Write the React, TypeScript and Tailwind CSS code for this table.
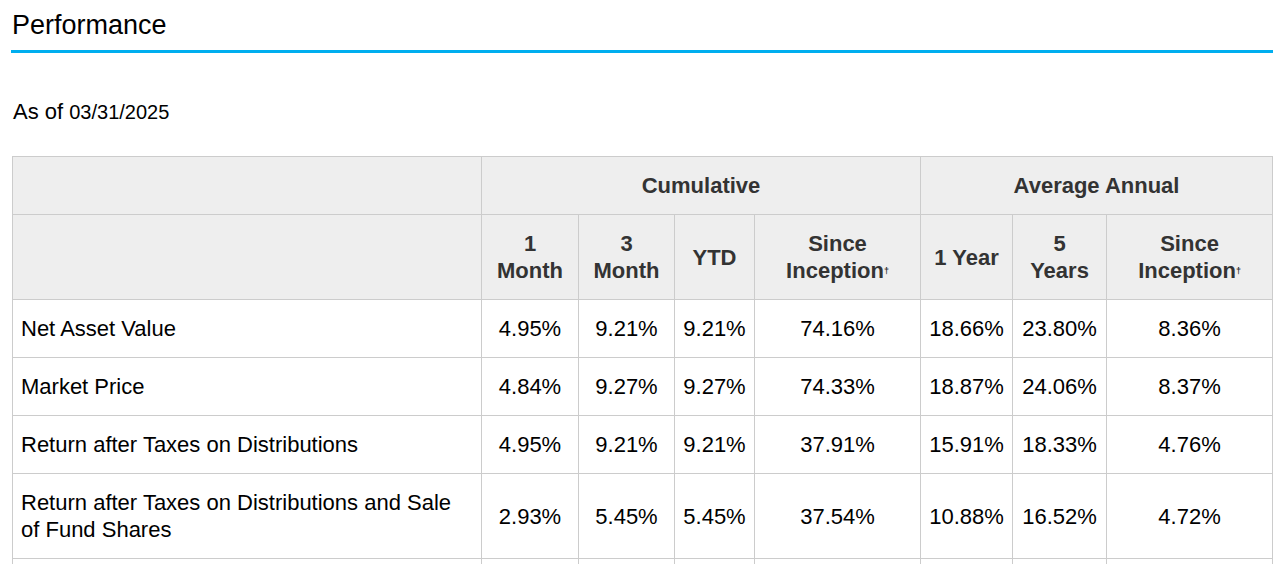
const rows = [
  { label: 'Net Asset Value', values: ['4.95%', '9.21%', '9.21%', '74.16%', '18.66%', '23.80%', '8.36%'] },
  { label: 'Market Price', values: ['4.84%', '9.27%', '9.27%', '74.33%', '18.87%', '24.06%', '8.37%'] },
  { label: 'Return after Taxes on Distributions', values: ['4.95%', '9.21%', '9.21%', '37.91%', '15.91%', '18.33%', '4.76%'] },
  {
    label: 'Return after Taxes on Distributions and Sale of Fund Shares',
    values: ['2.93%', '5.45%', '5.45%', '37.54%', '10.88%', '16.52%', '4.72%'],
  },
  // next row is cut off by the viewport
  { label: '', values: ['', '', '', '', '', '', ''] },
]

const colWidths = ['w-[469px]', 'w-[97px]', 'w-[96px]', 'w-[80px]', 'w-[166px]', 'w-[92px]', 'w-[94px]', 'w-[166px]']

function Dagger() {
  return <sup className="text-[9px]">†</sup>
}

export default function App() {
  const th = 'border border-[#cccccc] bg-[#eeeeee] px-2 py-[15px] text-center font-bold text-[#333333]'
  const td = 'h-[58px] border border-[#cccccc] px-1 py-[15px] text-center text-black'

  return (
    <div className="min-h-screen bg-white pl-[11px] pt-[10px] font-['Liberation_Sans',Arial,sans-serif]">
      <div className="w-[1262px]">
        {/* Section title */}
        <h2 className="border-b-[3px] border-[#00aeef] pb-[9px] pl-px text-[27px] leading-[31px] text-black">
          Performance
        </h2>

        <p className="mt-[46px] pl-[2px] text-[22px] leading-[25px] text-black">
          As of <span className="text-[20px]">03/31/2025</span>
        </p>

        {/* Performance table */}
        <table className="mt-[31px] ml-px w-[1261px] table-fixed border-collapse text-[22px] leading-[27px]">
          <colgroup>
            {colWidths.map((w, i) => (
              <col key={i} className={w} />
            ))}
          </colgroup>
          <thead>
            <tr>
              <th className={th}></th>
              <th colSpan={4} className={th}>
                Cumulative
              </th>
              <th colSpan={3} className={th}>
                Average Annual
              </th>
            </tr>
            <tr>
              <th className={th}></th>
              <th className={th}>
                1<br />Month
              </th>
              <th className={th}>
                3<br />Month
              </th>
              <th className={th}>YTD</th>
              <th className={th}>
                Since
                <br />
                Inception<Dagger />
              </th>
              <th className={th}>1 Year</th>
              <th className={th}>
                5<br />Years
              </th>
              <th className={th}>
                Since
                <br />
                Inception<Dagger />
              </th>
            </tr>
          </thead>
          <tbody>
            {rows.map((row, r) => (
              <tr key={r}>
                <td className="h-[58px] border border-[#cccccc] py-[15px] pl-2 pr-4 text-left text-black">{row.label}</td>
                {row.values.map((v, i) => (
                  <td key={i} className={td}>
                    {v}
                  </td>
                ))}
              </tr>
            ))}
          </tbody>
        </table>
      </div>
    </div>
  )
}
